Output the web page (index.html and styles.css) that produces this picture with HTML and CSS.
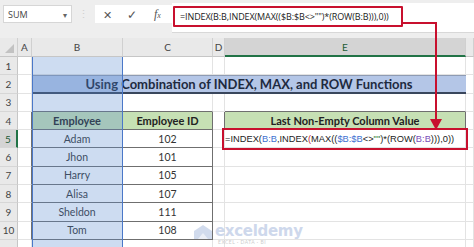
FILE: index.html
```html
<!DOCTYPE html>
<html lang="en">
  <head>
    <meta charset="UTF-8" />
    <meta name="viewport" content="width=device-width, initial-scale=1.0" />
    <title>Last Non-Empty Column Value</title>
    <link rel="stylesheet" href="styles.css">
  </head>
  <body>
    <div class="window">
      <div class="formula-row">
        <div class="name-box">SUM<span class="drop">▾</span></div>
        <div class="grip">⋮</div>
        <div class="fx-box">
          <span class="cancel">✕</span>
          <span class="enter">✓</span>
          <span class="fx">f<small>x</small></span>
        </div>
        <div class="formula-input">
          <span class="formula-hl">=INDEX(B:B,INDEX(MAX(($B:$B&lt;&gt;"")*(ROW(B:B))),0))</span>
        </div>
      </div>

      <div class="sheet">
        <div class="row head">
          <div class="corner"><span class="tri"></span></div>
          <div class="col-h">A</div>
          <div class="col-h">B</div>
          <div class="col-h">C</div>
          <div class="col-h">D</div>
          <div class="col-h active">E</div>
          <div class="col-h"></div>
        </div>

        <div class="row">
          <div class="rh">1</div><div class="c"></div><div class="c"></div><div class="c"></div><div class="c"></div><div class="c"></div><div class="c"></div>
        </div>
        <div class="row">
          <div class="rh">2</div><div class="c"></div>
          <div class="title">Using Combination of INDEX, MAX, and ROW Functions</div>
          <div class="c"></div>
        </div>
        <div class="row">
          <div class="rh">3</div><div class="c"></div><div class="c above"></div><div class="c above"></div><div class="c"></div><div class="c above"></div><div class="c"></div>
        </div>
        <div class="row">
          <div class="rh">4</div><div class="c left-of"></div>
          <div class="c tb th">Employee</div>
          <div class="c tb th">Employee ID</div>
          <div class="c left-of"></div>
          <div class="c tb th">Last Non-Empty Column Value</div>
          <div class="c"></div>
        </div>
        <div class="row">
          <div class="rh active">5</div><div class="c left-of"></div>
          <div class="c tb">Adam</div>
          <div class="c tb">102</div>
          <div class="c"></div>
          <div class="c edit">=INDEX(<b class="ref">B:B</b>,INDEX<b class="par">(</b>MAX((<b class="ref">$B:$B</b>&lt;&gt;<b class="str">""</b>)*(ROW(<b class="ref2">B:B</b>))),0))</div>
          <div class="c"></div>
        </div>
        <div class="row">
          <div class="rh">6</div><div class="c left-of"></div>
          <div class="c tb">Jhon</div><div class="c tb">101</div>
          <div class="c"></div><div class="c"></div><div class="c"></div>
        </div>
        <div class="row">
          <div class="rh">7</div><div class="c left-of"></div>
          <div class="c tb">Harry</div><div class="c tb">105</div>
          <div class="c"></div><div class="c"></div><div class="c"></div>
        </div>
        <div class="row">
          <div class="rh">8</div><div class="c left-of"></div>
          <div class="c tb">Alisa</div><div class="c tb">107</div>
          <div class="c"></div><div class="c"></div><div class="c"></div>
        </div>
        <div class="row">
          <div class="rh">9</div><div class="c left-of"></div>
          <div class="c tb">Sheldon</div><div class="c tb">111</div>
          <div class="c"></div><div class="c"></div><div class="c"></div>
        </div>
        <div class="row">
          <div class="rh">10</div><div class="c left-of"></div>
          <div class="c tb">Tom</div><div class="c tb">108</div>
          <div class="c"></div><div class="c"></div><div class="c"></div>
        </div>
        <div class="row">
          <div class="rh"></div><div class="c"></div><div class="c"></div><div class="c"></div><div class="c"></div><div class="c"></div><div class="c"></div>
        </div>
      </div>

      <!-- range highlight for B:B while editing -->
      <div class="ref-range"></div>

      <svg class="arrow" width="474" height="247" viewBox="0 0 474 247">
        <path d="M402 23 H436 V122" fill="none" stroke="#c8102e" stroke-width="2" />
        <polygon points="430,119 442,119 436,130" fill="#c8102e" />
      </svg>

      <div class="watermark">
        <svg width="20" height="16" viewBox="0 0 20 16">
          <path d="M1 15 V7 L10 1 L19 7 V15 Z" fill="#cdd8ec" />
          <path d="M5 15 L10 9 L15 15 Z" fill="#e9eef7" />
        </svg>
        <div class="wm-text">
          <span class="wm-name">exceldemy</span>
          <span class="wm-tag">EXCEL · DATA · BI</span>
        </div>
      </div>
    </div>
  </body>
</html>
```

FILE: styles.css
```css
body {
  margin: 0;
  width: 474px;
  height: 247px;
  overflow: hidden;
  font-family: Lato, "Liberation Sans", sans-serif;
}

.window {
  position: relative;
  width: 474px;
  height: 247px;
  overflow: hidden;
  background: #fff;
}

/* formula bar */

.formula-row {
  display: flex;
  align-items: flex-start;
  height: 38px;
  background: #eeeeee;
  font-family: "Open Sans", "Liberation Sans", sans-serif;
}

.name-box {
  display: flex;
  align-items: center;
  justify-content: space-between;
  box-sizing: border-box;
  width: 69px;
  height: 18px;
  margin: 5px 0 0 3px;
  padding: 0 4px 0 4px;
  background: #fff;
  border: 1px solid #d6d6d6;
  font-size: 9px;
  color: #444;
}

.name-box .drop {
  font-size: 8px;
  color: #666;
}

.grip {
  width: 23px;
  margin-top: 6px;
  text-align: center;
  font-size: 11px;
  color: #d0d0d0;
}

.fx-box {
  display: flex;
  align-items: center;
  box-sizing: border-box;
  width: 77px;
  height: 18px;
  margin-top: 5px;
  background: #fff;
  color: #555;
}

.fx-box .cancel {
  margin-left: 8px;
  font-size: 11px;
}

.fx-box .enter {
  margin-left: 15px;
  font-size: 12px;
}

.fx-box .fx {
  margin-left: 17px;
  font-family: "Liberation Serif", serif;
  font-style: italic;
  font-size: 12px;
}

.fx-box .fx small {
  font-size: 8px;
}

.formula-input {
  flex: 1;
  box-sizing: border-box;
  height: 30px;
  margin-top: 3px;
  background: #fff;
  border-bottom: 1px solid #d8d8d8;
}

.formula-hl {
  display: inline-flex;
  align-items: center;
  box-sizing: border-box;
  width: 230px;
  height: 21px;
  margin-left: 1px;
  padding-left: 5px;
  border: 2px solid #c8102e;
  border-radius: 1px;
  font-size: 9px;
  letter-spacing: -0.1px;
  color: #222;
  white-space: nowrap;
}

/* grid */

.row {
  display: grid;
  grid-template-columns: 18px 14px 91px 90px 12px 241px 8px;
  height: 18.3px;
}

.row.head {
  height: 19px;
  background: #e9e9e9;
}

.corner {
  position: relative;
  border-right: 1px solid #d0d0d0;
  border-bottom: 1px solid #c6c6c6;
}

.corner .tri {
  position: absolute;
  right: 3px;
  bottom: 3px;
  width: 0;
  height: 0;
  border-left: 9px solid transparent;
  border-bottom: 9px solid #c2c2c2;
}

.col-h {
  display: flex;
  align-items: center;
  justify-content: center;
  border-right: 1px solid #d0d0d0;
  border-bottom: 1px solid #c6c6c6;
  font-size: 10px;
  color: #444;
}

.col-h.active {
  background: #d4d4d4;
  border-bottom: 2px solid #217346;
  color: #1d5c36;
}

.rh {
  display: flex;
  align-items: center;
  justify-content: center;
  box-sizing: border-box;
  background: #e9e9e9;
  border-right: 1px solid #c6c6c6;
  border-bottom: 1px solid #d6d6d6;
  font-size: 10px;
  color: #444;
}

.rh.active {
  background: #d4d4d4;
  border-right: 2px solid #217346;
  color: #1d5c36;
}

.c {
  display: flex;
  align-items: center;
  justify-content: center;
  box-sizing: border-box;
  border-right: 1px solid #e3e3e3;
  border-bottom: 1px solid #e3e3e3;
  font-size: 10.5px;
  color: #333;
  white-space: nowrap;
}

.c.above {
  border-bottom-color: #6f6f6f;
}

.c.left-of {
  border-right-color: #6f6f6f;
}

.c.tb {
  border-right-color: #6f6f6f;
  border-bottom-color: #6f6f6f;
}

.c.th {
  background: #c6e0b4;
  font-weight: bold;
  font-size: 11px;
  color: #222;
}

.title {
  grid-column: 3 / 7;
  display: flex;
  align-items: center;
  justify-content: center;
  box-sizing: border-box;
  background: #b4c6e7;
  border-top: 1px solid #8e9bb3;
  border-bottom: 2px solid #39465c;
  font-weight: bold;
  font-size: 13px;
  color: #1e2a3f;
}

.c.edit {
  position: relative;
  z-index: 2;
  justify-content: flex-start;
  padding-left: 1px;
  outline: 2px solid #c8102e;
  outline-offset: 0;
  margin-left: -1px;
  font-family: "Liberation Sans", Arial, sans-serif;
  font-size: 9.3px;
  color: #222;
}

.c.edit b {
  font-weight: normal;
}

.c.edit .ref {
  color: #3d6fd0;
}

.c.edit .ref2 {
  color: #7a4fb8;
}

.c.edit .par {
  color: #c0282f;
}

.c.edit .str {
  color: #2e7d32;
}

/* overlays */

.ref-range {
  position: absolute;
  left: 32px;
  top: 57px;
  width: 91px;
  height: 200px;
  box-sizing: border-box;
  background: rgba(91, 140, 210, 0.3);
  border-left: 1px solid #4a78c8;
  border-right: 1px solid #4a78c8;
  pointer-events: none;
}

.arrow {
  position: absolute;
  left: 0;
  top: 0;
  pointer-events: none;
  z-index: 3;
}

.watermark {
  position: absolute;
  left: 193px;
  top: 224px;
  display: flex;
  align-items: flex-start;
  gap: 2px;
  opacity: 0.9;
}

.wm-text {
  display: flex;
  flex-direction: column;
  line-height: 1;
}

.wm-name {
  font-family: "DejaVu Sans", sans-serif;
  font-size: 15px;
  font-weight: bold;
  color: #c9d4ea;
  letter-spacing: -0.3px;
}

.wm-tag {
  margin-top: 1px;
  padding-left: 3px;
  font-size: 5px;
  color: #c8c8c8;
  letter-spacing: 0.5px;
}
```
